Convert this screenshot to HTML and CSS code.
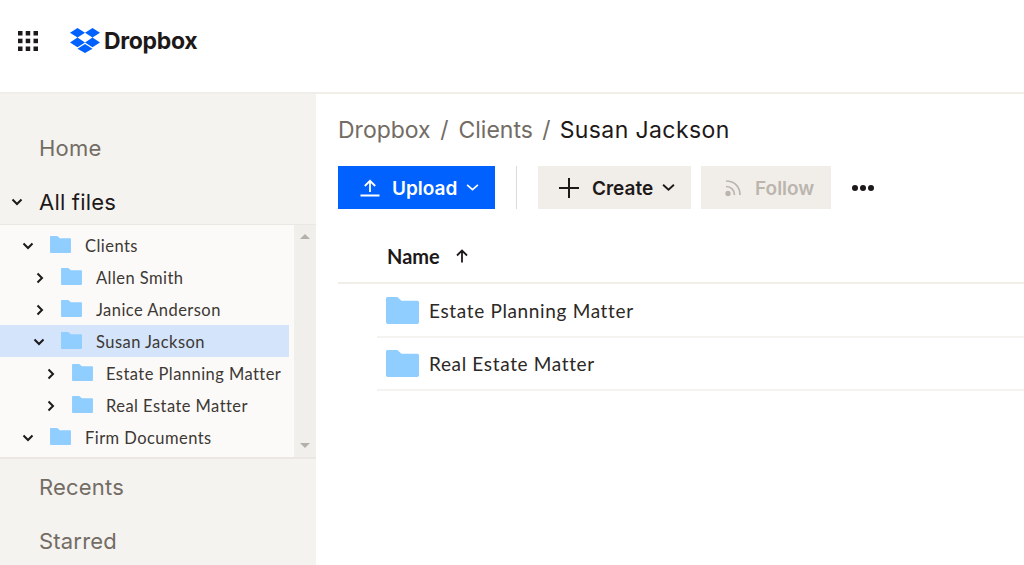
FILE: index.html
```html
<!DOCTYPE html>
<html lang="en">
<head>
<meta charset="utf-8">
<title>Dropbox - Susan Jackson</title>
<link rel="stylesheet" href="styles.css">
</head>
<body>
<svg class="defs" width="0" height="0" aria-hidden="true">
  <symbol id="folder" viewBox="0 0 32 26"><path d="M0 1.500C0 .7.7 0 1.500 0H11l4 3.500h15.500c.8 0 1.500.7 1.500 1.500v19.500c0 .8-.7 1.500-1.500 1.500h-29C.7 26 0 25.300 0 24.500z" fill="#90ceff"/></symbol>
  <symbol id="down" viewBox="0 0 12 8"><path d="M1.500 1.500 6 6l4.500-4.500" fill="none" stroke="#1e1919" stroke-width="2"/></symbol>
  <symbol id="right" viewBox="0 0 8 12"><path d="M1.500 1.500 6 6l-4.500 4.500" fill="none" stroke="#1e1919" stroke-width="2"/></symbol>
</svg>
<header class="topbar">
  <svg class="grid-icon" viewBox="0 0 20 20" width="20" height="20" aria-hidden="true">
    <g fill="#1e1919">
      <rect x="0" y="0" width="4.500" height="4.500"/><rect x="7.700" y="0" width="4.500" height="4.500"/><rect x="15.500" y="0" width="4.500" height="4.500"/>
      <rect x="0" y="7.700" width="4.500" height="4.500"/><rect x="7.700" y="7.700" width="4.500" height="4.500"/><rect x="15.500" y="7.700" width="4.500" height="4.500"/>
      <rect x="0" y="15.500" width="4.500" height="4.500"/><rect x="7.700" y="15.500" width="4.500" height="4.500"/><rect x="15.500" y="15.500" width="4.500" height="4.500"/>
    </g>
  </svg>
  <div class="brand">
    <svg class="logo" viewBox="0 0 30 25" width="30" height="25" aria-hidden="true">
      <path fill="#0061fe" d="M7.500 0 0 4.800l7.500 4.800L15 4.800zM22.500 0 15 4.800l7.500 4.800L30 4.800zM0 14.400l7.500 4.800 7.500-4.800-7.500-4.800zM22.500 9.600 15 14.400l7.500 4.800 7.500-4.800zM7.500 20.800l7.500 4.200 7.500-4.200-7.500-4.800z"/>
    </svg>
    <span class="wordmark">Dropbox</span>
  </div>
</header>
<div class="shell">
  <aside class="sidebar">
    <div class="nav-item nav-home">Home</div>
    <div class="nav-item nav-files"><svg class="nav-chev"><use href="#down"/></svg>All files</div>
    <div class="tree-box">
      <ul class="tree">
        <li class="row lvl0"><svg class="chev-d"><use href="#down"/></svg><svg class="folder"><use href="#folder"/></svg><span>Clients</span></li>
        <li class="row lvl1"><svg class="chev-r"><use href="#right"/></svg><svg class="folder"><use href="#folder"/></svg><span>Allen Smith</span></li>
        <li class="row lvl1"><svg class="chev-r"><use href="#right"/></svg><svg class="folder"><use href="#folder"/></svg><span>Janice Anderson</span></li>
        <li class="row lvl1 selected"><svg class="chev-d"><use href="#down"/></svg><svg class="folder"><use href="#folder"/></svg><span>Susan Jackson</span></li>
        <li class="row lvl2"><svg class="chev-r"><use href="#right"/></svg><svg class="folder"><use href="#folder"/></svg><span>Estate Planning Matter</span></li>
        <li class="row lvl2"><svg class="chev-r"><use href="#right"/></svg><svg class="folder"><use href="#folder"/></svg><span>Real Estate Matter</span></li>
        <li class="row lvl0"><svg class="chev-d"><use href="#down"/></svg><svg class="folder"><use href="#folder"/></svg><span>Firm Documents</span></li>
      </ul>
      <div class="scrollbar"><i class="arrow-up"></i><i class="arrow-down"></i></div>
    </div>
    <div class="nav-item nav-recents">Recents</div>
    <div class="nav-item nav-starred">Starred</div>
  </aside>
  <main class="content">
    <nav class="crumbs"><span class="crumb">Dropbox</span><span class="slash">/</span><span class="crumb">Clients</span><span class="slash">/</span><span class="current">Susan Jackson</span></nav>
    <div class="toolbar">
      <button class="btn btn-upload">
        <svg class="ic-upload" viewBox="0 0 20 18" width="20" height="18" aria-hidden="true"><path d="M10 13V2M4.800 7 10 1.800 15.200 7M.5 16.500h19" fill="none" stroke="#fff" stroke-width="1.800"/></svg>
        <span>Upload</span>
        <svg class="ic-caret" viewBox="0 0 12 8" width="13" height="9" aria-hidden="true"><path d="M1 1.500 6 6l5-4.500" fill="none" stroke="#fff" stroke-width="1.500"/></svg>
      </button>
      <div class="divider"></div>
      <button class="btn btn-create">
        <svg class="ic-plus" viewBox="0 0 20 20" width="20" height="20" aria-hidden="true"><path d="M10 0v20M0 10h20" fill="none" stroke="#1e1919" stroke-width="2"/></svg>
        <span>Create</span>
        <svg class="ic-caret" viewBox="0 0 12 8" width="13" height="9" aria-hidden="true"><path d="M1 1.500 6 6l5-4.500" fill="none" stroke="#1e1919" stroke-width="1.800"/></svg>
      </button>
      <button class="btn btn-follow">
        <svg class="ic-rss" viewBox="0 0 18 18" width="18" height="18" aria-hidden="true"><circle cx="3" cy="14.500" r="2.700" fill="#bbb5ae"/><path d="M1 7.500c5 0 8.500 3.500 8.500 8.500M1 2c8.500 0 14 5.500 14 14" fill="none" stroke="#bbb5ae" stroke-width="1.700"/></svg>
        <span>Follow</span>
      </button>
      <div class="more" aria-label="More"><i></i><i></i><i></i></div>
    </div>
    <div class="table">
      <div class="thead"><span>Name</span><svg class="ic-sort" viewBox="0 0 14 14" width="14" height="14" aria-hidden="true"><path d="M7 13.500V2M2 6.500 7 1.500l5 5" fill="none" stroke="#1e1919" stroke-width="1.800"/></svg></div>
      <div class="trow"><svg class="folder-lg"><use href="#folder"/></svg><span>Estate Planning Matter</span></div>
      <div class="trow"><svg class="folder-lg"><use href="#folder"/></svg><span>Real Estate Matter</span></div>
    </div>
  </main>
</div>
</body>
</html>
```
FILE: styles.css
```css
* { box-sizing: border-box; }
html, body { margin: 0; height: 100%; overflow: hidden; }
body { background: #fff; color: #1e1919; font-family: "Liberation Sans", Arial, sans-serif; }
.defs { position: absolute; }
.topbar { height: 94px; display: flex; align-items: center; padding: 0 0 11px 18px; border-bottom: 2px solid #f1eeea; }
.grid-icon { display: block; }
.brand { display: flex; align-items: center; margin-left: 32px; position: relative; }
.logo { display: block; }
.wordmark { margin-left: 4px; font-family: "Inter", sans-serif; font-weight: 700; font-size: 23px; letter-spacing: -0.3px; line-height: 28px; color: #1e1919; }
.shell { display: flex; height: 471px; }
.sidebar { width: 317px; flex: none; background: #f5f3f0; border-right: 1px solid #fff; overflow: hidden; }
.nav-item { font-family: "Inter", sans-serif; font-size: 22px; letter-spacing: 0.2px; line-height: 30px; padding-left: 39px; color: #736c64; position: relative; }
.nav-home { margin-top: 39px; }
.nav-files { margin-top: 24px; color: #1e1919; }
.nav-chev { position: absolute; left: 11px; top: 11px; width: 12px; height: 8px; }
.nav-recents { margin-top: 13px; }
.nav-starred { margin-top: 24px; }
.tree-box { display: flex; height: 235px; margin-top: 7px; background: #fbfaf9; border-top: 1px solid #ebe7e2; border-bottom: 2px solid #ebe7e2; }
.tree { list-style: none; margin: 0; padding: 4px 0 0; flex: 1; min-width: 0; margin-right: 5px; }
.row { height: 32px; display: flex; align-items: center; padding-top: 2px; font-size: 16.500px; letter-spacing: 0.45px; color: #3d3833; white-space: nowrap; font-family: "Lato", sans-serif; }
.lvl0 { padding-left: 22px; }
.lvl1 { padding-left: 33px; }
.lvl2 { padding-left: 44px; }
.lvl2 span { margin-left: -1px; }
.selected { background: #d3e4fb; }
.chev-d { width: 12px; height: 8px; flex: none; }
.chev-r { width: 8px; height: 12px; flex: none; margin-left: 3px; margin-right: 1px; }
.folder { width: 21px; height: 17px; flex: none; margin-left: 16px; margin-right: 14px; position: relative; top: -2px; }
.scrollbar { width: 22px; flex: none; background: #f1efec; display: flex; flex-direction: column; justify-content: space-between; align-items: center; padding: 9px 0 9px; }
.arrow-up { width: 0; height: 0; border-left: 5px solid transparent; border-right: 5px solid transparent; border-bottom: 5px solid #b5b0aa; }
.arrow-down { width: 0; height: 0; border-left: 5px solid transparent; border-right: 5px solid transparent; border-top: 5px solid #b5b0aa; }
.content { flex: 1; min-width: 0; padding: 20px 0 0 21px; }
.crumbs { display: flex; align-items: center; height: 32px; font-family: "Inter", sans-serif; font-size: 23px; color: #736c64; white-space: nowrap; }
.slash { margin: 0 10px 0 9.500px; color: #736c64; }
.current { color: #1e1919; letter-spacing: 0.4px; margin-left: -1px; }
.toolbar { display: flex; align-items: center; margin-top: 20px; height: 43px; }
.btn { height: 43px; border: 0; padding: 2px 0 0; display: flex; align-items: center; font-family: "Inter", sans-serif; font-weight: 600; font-size: 19px; }
.btn svg { position: relative; top: -1px; }
.btn-upload { width: 157px; background: #0061fe; color: #fff; padding-left: 22px; }
.btn-upload span { margin-left: 12px; }
.btn-upload .ic-caret { margin-left: 9px; }
.divider { width: 1px; height: 43px; background: #dedad5; margin: 0 21px; }
.btn-create { width: 153px; background: #f1eeea; color: #1e1919; padding-left: 21px; }
.btn-create span { margin-left: 13px; }
.btn-create .ic-caret { margin-left: 9px; }
.btn-follow { width: 130px; background: #f1eeea; color: #bbb5ae; margin-left: 10px; padding-left: 24px; }
.btn-follow span { margin-left: 12px; }
.more { display: flex; gap: 2px; margin-left: 21px; }
.more i { width: 6px; height: 6px; border-radius: 50%; background: #1e1919; }
.table { margin-top: 21px; }
.thead { height: 54px; margin-bottom: 1px; display: flex; align-items: center; padding: 0 0 0 49px; font-family: "Lato", sans-serif; font-weight: 700; font-size: 20px; border-bottom: 2px solid #f1eeea; }
.ic-sort { margin-left: 15px; }
.trow { height: 53px; margin-left: 39px; display: flex; align-items: center; padding-left: 9px; border-bottom: 2px solid #f5f3f0; font-family: "Lato", sans-serif; font-size: 19px; letter-spacing: 0.65px; color: #2c2825; }
.folder-lg { width: 33px; height: 27px; margin-right: 10px; flex: none; }
```
